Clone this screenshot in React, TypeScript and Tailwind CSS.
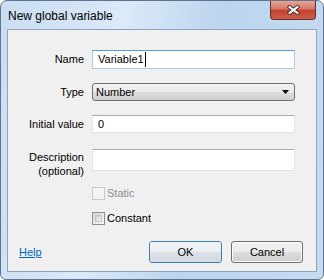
import React from 'react';

const ui = { fontFamily: '"Liberation Sans", Arial, sans-serif' };

function CloseGlyph() {
  return (
    <svg width="13" height="10" viewBox="0 0 13 10">
      <path d="M2.5 2 L10.5 8 M10.5 2 L2.5 8" stroke="#3b2626" strokeWidth="3.8" strokeLinecap="square" />
      <path d="M2.5 2 L10.5 8 M10.5 2 L2.5 8" stroke="#ffffff" strokeWidth="2" strokeLinecap="square" />
    </svg>
  );
}

function Row({ label, children, className = '' }: { label: React.ReactNode; children: React.ReactNode; className?: string }) {
  return (
    <div className={`flex ${className}`}>
      <div className="w-[76px] text-right text-[11px] text-black">{label}</div>
      <div className="ml-[8px] w-[203px]">{children}</div>
    </div>
  );
}

function TextBox({ focused, value }: { focused?: boolean; value?: string }) {
  return (
    <div
      className={`flex h-full items-center border bg-white pl-[5px] text-[11px] text-black ${
        focused ? 'border-[#a8cbea] border-t-[#5b9bd5]' : 'border-[#e2e3ea] border-t-[#abadb3]'
      }`}
    >
      {value}
      {focused && <span className="ml-[1px] inline-block h-[15px] w-px bg-black" />}
    </div>
  );
}

function Checkbox({ label, disabled }: { label: string; disabled?: boolean }) {
  return (
    <div className="ml-[84px] flex h-[13px] items-center">
      <span
        className={`h-[13px] w-[13px] border ${
          disabled ? 'border-[#c9c9c9] bg-[#f4f4f4]' : 'border-[#8e8f8f] bg-[linear-gradient(135deg,#d9d9d9,#f6f6f6)] p-[2px]'
        }`}
      >
        {!disabled && <span className="block h-full w-full border border-[#c4c4c4] bg-[linear-gradient(135deg,#cfcfcf,#f2f2f2)]" />}
      </span>
      <span className={`ml-[2px] text-[11px] ${disabled ? 'text-[#8d8d8d]' : 'text-black'}`}>{label}</span>
    </div>
  );
}

export default function App() {
  return (
    <div style={ui} className="flex h-[280px] w-[324px] flex-col overflow-hidden rounded-t-[7px] rounded-b-[6px] border border-[#5f738d] bg-[linear-gradient(100deg,#c9ddf3_0%,#dbe9f8_35%,#bcd4ee_60%,#c5dbf2_100%)]">
      <div className="flex h-[28px] items-start justify-between pl-[7px] pr-[7px]">
        <span className="mt-[8px] text-[12px] leading-[14px] text-black">New global variable</span>
        <div className="-mt-px flex h-[20px] w-[46px] items-center justify-center rounded-b-[4px] border border-t-0 border-[#5c3030] bg-[linear-gradient(to_bottom,#e9a99b_0%,#d77d6c_45%,#c3422f_55%,#d05d46_100%)]">
          <CloseGlyph />
        </div>
      </div>
      <div className="mx-[6px] mb-[7px] flex flex-1 flex-col border border-[#8ea4be] bg-[#f0f0f0]">
        <Row label="Name" className="mt-[18px] h-[23px] items-center">
          <TextBox focused value="Variable1" />
        </Row>
        <Row label="Type" className="mt-[11px] h-[20px] items-center">
          <div className="flex h-full items-center justify-between rounded-[3px] border border-[#707070] bg-[linear-gradient(to_bottom,#f2f2f2_0%,#ebebeb_50%,#dddddd_50%,#cfcfcf_100%)] pl-[3px] pr-[5px] text-[11px] text-black">
            <span>Number</span>
            <svg width="7" height="4" viewBox="0 0 7 4">
              <path d="M0 0 H7 L3.5 4 Z" fill="#000" />
            </svg>
          </div>
        </Row>
        <Row label="Initial value" className="mt-[11px] h-[22px] items-center">
          <TextBox value="0" />
        </Row>
        <Row
          label={
            <div className="pt-[1px] leading-[14px]">
              Description
              <br />
              (optional)
            </div>
          }
          className="mt-[14px] h-[22px] items-start"
        >
          <div className="h-[22px]">
            <TextBox />
          </div>
        </Row>
        <div className="mt-[16px]">
          <Checkbox label="Static" disabled />
        </div>
        <div className="mt-[12px]">
          <Checkbox label="Constant" />
        </div>
        <div className="mt-[16px] flex h-[22px] items-center pl-[11px] pr-[13px]">
          <span className="text-[11px] text-[#0066cc] underline">Help</span>
          <div className="ml-auto flex gap-[9px]">
            <div className="flex h-[22px] w-[73px] items-center justify-center rounded-[3px] border border-[#3c7fb1] bg-[linear-gradient(to_bottom,#eaf6fd_0%,#d9f0fc_50%,#bee6fd_50%,#a7d9f5_100%)] text-[11px] text-black shadow-[inset_0_0_0_1px_#c6e6f8]">
              <span className="flex h-full w-full items-center justify-center rounded-[2px] bg-[linear-gradient(to_bottom,#f2f5f7_0%,#eaeef0_50%,#dce2e6_50%,#d3dadf_100%)]">OK</span>
            </div>
            <div className="flex h-[22px] w-[72px] items-center justify-center rounded-[3px] border border-[#707070] bg-[linear-gradient(to_bottom,#f2f2f2_0%,#ebebeb_50%,#dddddd_50%,#cfcfcf_100%)] text-[11px] text-black shadow-[inset_0_0_0_1px_#fcfcfc]">
              Cancel
            </div>
          </div>
        </div>
      </div>
    </div>
  );
}
